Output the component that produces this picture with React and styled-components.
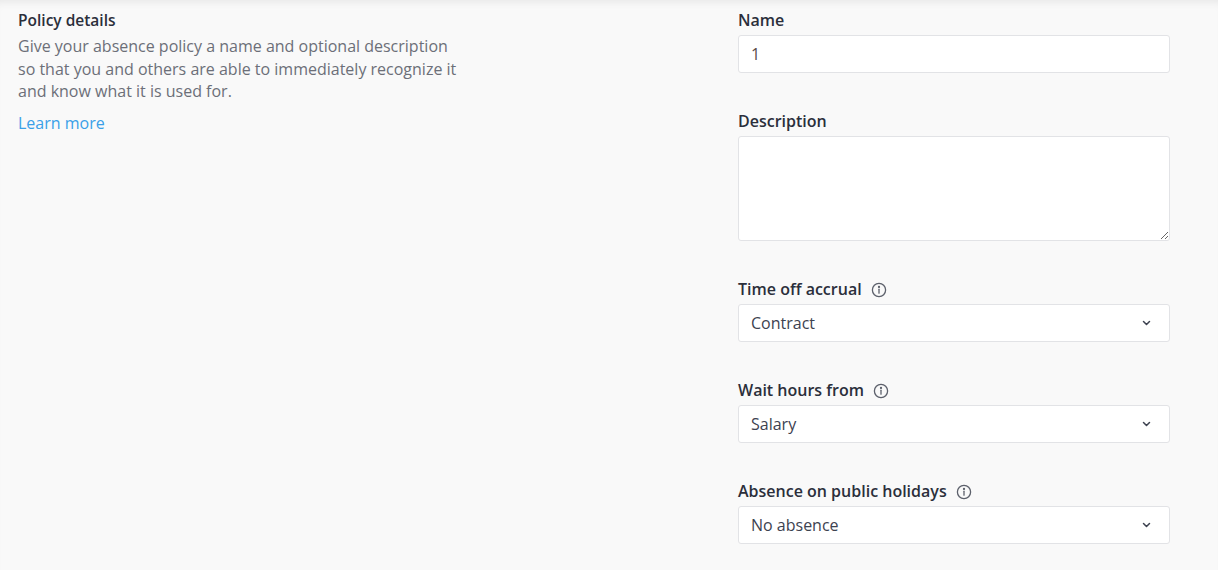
import React from 'react';
import styled, { createGlobalStyle } from 'styled-components';

const Global = createGlobalStyle`
  html, body { margin: 0; background: #f9f9f9; }
  body { font-family: "Open Sans", "Liberation Sans", sans-serif; }
`;

const Page = styled.div`
  min-height: 570px;
  box-shadow: inset 0 8px 8px -6px rgba(0, 0, 0, 0.08);
  display: grid;
  grid-template-columns: 720px 432px;
  padding: 10px 0 0 18px;
  box-sizing: border-box;
`;

const Intro = styled.div`
  width: 448px;
`;

const Title = styled.h2`
  margin: 0 0 5px;
  font-size: 15.5px;
  font-weight: 600;
  line-height: 20px;
  color: #2b2f3b;
`;

const Text = styled.p`
  margin: 0 0 9px;
  font-size: 16px;
  line-height: 22.5px;
  color: #6c6f78;
`;

const Link = styled.a`
  font-size: 16px;
  line-height: 22px;
  color: #3aa0e8;
  text-decoration: none;
`;

const Form = styled.div`
  display: flex;
  flex-direction: column;
  gap: 38px;
`;

const Field = styled.div`
  display: flex;
  flex-direction: column;
  gap: 4px;
`;

const Label = styled.label`
  display: flex;
  align-items: center;
  gap: 9px;
  font-size: 16px;
  font-weight: 600;
  line-height: 21px;
  color: #2b2f3b;
`;

const Input = styled.input`
  box-sizing: border-box;
  height: 38px;
  border: 1px solid #e2e3e6;
  border-radius: 3px;
  background: #fff;
  padding: 0 12px;
  font: inherit;
  font-size: 16px;
  color: #5a4a48;
  outline: none;
`;

const Area = styled.textarea`
  box-sizing: border-box;
  height: 105px;
  border: 1px solid #e2e3e6;
  border-radius: 3px;
  background: #fff;
  resize: vertical;
  outline: none;
`;

const Select = styled.div`
  box-sizing: border-box;
  height: 38px;
  border: 1px solid #e2e3e6;
  border-radius: 3px;
  background: #fff;
  padding: 0 18px 0 12px;
  display: flex;
  align-items: center;
  justify-content: space-between;
  font-size: 16px;
  color: #3d4250;
`;

const Info = () => (
  <svg width="16" height="16" viewBox="0 0 16 16" fill="none" stroke="#5c606b" strokeWidth="1.3">
    <circle cx="8" cy="8" r="6.6" />
    <line x1="8" y1="7.2" x2="8" y2="11.2" strokeLinecap="round" />
    <circle cx="8" cy="4.9" r="0.5" fill="#5c606b" />
  </svg>
);

const Chevron = () => (
  <svg width="9" height="6" viewBox="0 0 9 6" fill="none" stroke="#3d4250" strokeWidth="1.5">
    <path d="M1.5 1.5 L4.5 4.5 L7.5 1.5" strokeLinecap="round" strokeLinejoin="round" />
  </svg>
);

const selects = [
  ['Time off accrual', 'Contract'],
  ['Wait hours from', 'Salary'],
  ['Absence on public holidays', 'No absence'],
];

export default function App() {
  return (
    <>
      <Global />
      <Page>
        <Intro>
          <Title>Policy details</Title>
          <Text>
            Give your absence policy a name and optional description so that you and others are able to immediately recognize it and know what it is used for.
          </Text>
          <Link href="#">Learn more</Link>
        </Intro>
        <Form>
          <Field>
            <Label>Name</Label>
            <Input defaultValue="1" />
          </Field>
          <Field>
            <Label>Description</Label>
            <Area />
          </Field>
          {selects.map(([label, value]) => (
            <Field key={label}>
              <Label>{label}<Info /></Label>
              <Select>{value}<Chevron /></Select>
            </Field>
          ))}
        </Form>
      </Page>
    </>
  );
}
